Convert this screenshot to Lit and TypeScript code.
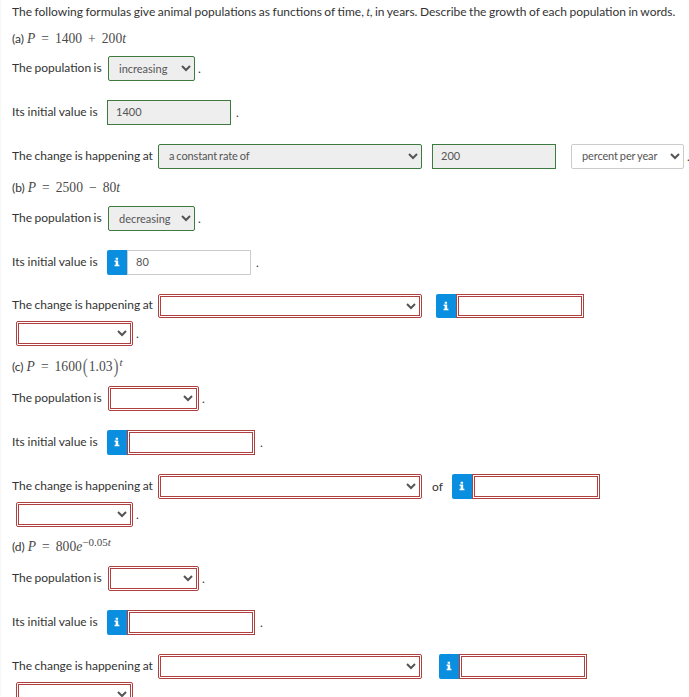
import { LitElement, html, css, nothing } from "lit";
import { customElement } from "lit/decorators.js";

type Kind = "ok" | "bad" | "plain";

const chg = (sel: string, kind: Kind, w: string) => html`
  <select class="f ${kind} ${w}"><option>${sel}</option></select>`;

const inp = (val: string, kind: Kind, w: string, info = false, short = false) => html`
  <span class="group">
    ${info
      ? html`<span class="info ${short ? "h24" : ""}"><svg width="6" height="10" viewBox="0 0 8 12"><path fill="#fff" d="M2.2 0.4h3.2v2.6H2.2zM0.8 4.1h4.8v5.6h1.6v1.9H0.8V9.7h1.4V5.9H0.8z"/></svg></span>`
      : nothing}
    <input class="f ${kind} ${w} ${short ? "h24" : ""}" .value=${val} />
  </span>`;

const pop = html`<span class="label lpop">The population is</span>`;
const init = html`<span class="label linit">Its initial value is</span>`;
const change = html`<span class="label lchg">The change is happening at</span>`;

@customElement("app-root")
export class AppRoot extends LitElement {
  static styles = css`
    :host {
      display: block;
      width: 689px;
      height: 697px;
      overflow: hidden;
      background: #fff;
      color: #333;
      font-family: Lato, "Open Sans", sans-serif;
      font-size: 12px;
      word-spacing: -0.55px;
      box-sizing: border-box;
      border-left: 1px solid #f7f7f7;
      padding: 3px 0 0 11px;
    }
    .intro { height: 18px; line-height: 18px; margin: 0 0 7px; white-space: nowrap; }
    .intro i { font-family: "Liberation Serif", serif; }
    .math { box-sizing: border-box; padding-top: 2px; height: 20px; line-height: 20px; margin: 0 0 8px; display: flex; align-items: center; white-space: nowrap; }
    .math.b { margin-top: 8px; margin-bottom: 9px; }
    .math.c { height: 23px; }
    .math.d { height: 22px; }
    .eq { font-family: "Liberation Serif", serif; font-size: 13.6px; color: #4a4a4a; margin-left: 3px; word-spacing: 0; }
    .eq i { font-style: italic; }
    .eq .op { margin: 0 6px; }
    .eq sup { font-size: 11px; line-height: 0; vertical-align: 5px; }
    .eq .paren { display: inline-block; font-size: 15px; line-height: 1; color: #666; margin: 0 1px; transform: scaleY(1.45); }
    .row { display: flex; flex-wrap: wrap; align-items: center; row-gap: 3px; margin-bottom: 19px; width: 677px; }
    .row.last { margin-bottom: 0; }
    .row.single { flex-wrap: nowrap; }
    .label { flex: none; white-space: nowrap; padding-bottom: 2px; box-sizing: border-box; }
    .lpop { width: 96px; }
    .linit { width: 95px; word-spacing: -0.2px; }
    .lchg { width: 146px; padding-bottom: 3px; }
    .dot { margin-left: 3px; }
    .dot.wide { margin-left: 5px; }
    .second { margin-left: 4px; }
    .g10 { margin-left: 10px; }
    .g14 { margin-left: 14px; }
    .g15 { margin-left: 15px; }
    .g17 { margin-left: 17px; }
    .of { margin-left: 10px; margin-right: 9px; }
    .group { display: inline-flex; align-items: stretch; }
    .info {
      width: 20px;
      height: 25px;
      flex: none;
      background: #0a8ee0;
      border-radius: 2px 0 0 2px;
      display: flex;
      align-items: center;
      justify-content: center;
      padding-bottom: 1px;
      box-sizing: border-box;
    }
    .f {
      box-sizing: border-box;
      height: 25px;
      margin: 0;
      flex: none;
      font-family: Lato, "Open Sans", sans-serif;
      font-size: 11px;
      word-spacing: -0.7px;
      color: #555;
      outline: none;
      border-radius: 2px;
      background-color: #fff;
    }
    input.f { padding: 0 8px 2px; border-radius: 0; }
    select.f { padding: 0 0 0 6px; }
    select.tight { letter-spacing: -0.12px; padding-bottom: 2px; }
    .ok { border: 1px solid #3d7a3d; background-color: #eee; }
    .plain { border: 1px solid #ccc; }
    .bad { border: 3px double #b04040; }
    .info.h24, .f.h24 { height: 24px; }
    .w87 { width: 87px; }
    .w91 { width: 91px; }
    .w124 { width: 124px; }
    .w128 { width: 128px; }
    .w264 { width: 264px; }
    .w113 { width: 113px; }
    .w117 { width: 117px; }
  `;

  render() {
    return html`
      <div class="intro">The following formulas give animal populations as functions of time, <i>t</i>, in years. Describe the growth of each population in words.</div>

      <div class="math"><span>(a)</span><span class="eq"><i>P</i><span class="op">=</span>1400<span class="op">+</span>200<i>t</i></span></div>
      <div class="row">${pop}${chg("increasing", "ok", "w87")}<span class="dot">.</span></div>
      <div class="row">${init}${inp("1400", "ok", "w124")}<span class="dot wide">.</span></div>
      <div class="row last single">${change}${chg("a constant rate of", "ok", "w264 tight")}
        <span class="g10">${inp("200", "ok", "w124")}</span>
        <span class="g15">${chg("percent per year", "plain", "w113 tight")}</span><span class="dot">.</span></div>

      <div class="math b"><span>(b)</span><span class="eq"><i>P</i><span class="op">=</span>2500<span class="op">−</span>80<i>t</i></span></div>
      <div class="row">${pop}${chg("decreasing", "ok", "w87")}<span class="dot">.</span></div>
      <div class="row">${init}${inp("80", "plain", "w124", true)}<span class="dot wide">.</span></div>
      <div class="row last">${change}${chg("", "bad", "w264 h24")}
        <span class="g14">${inp("", "bad", "w128", true, true)}</span>
        <span class="second">${chg("", "bad", "w117")}</span><span class="dot">.</span></div>

      <div class="math b c"><span>(c)</span><span class="eq"><i>P</i><span class="op">=</span>1600<span class="paren">(</span>1.03<span class="paren">)</span><sup><i>t</i></sup></span></div>
      <div class="row">${pop}${chg("", "bad", "w91")}<span class="dot">.</span></div>
      <div class="row">${init}${inp("", "bad", "w128", true)}<span class="dot wide">.</span></div>
      <div class="row last">${change}${chg("", "bad", "w264")}
        <span class="of">of</span>${inp("", "bad", "w128", true)}
        <span class="second">${chg("", "bad", "w117")}</span><span class="dot">.</span></div>

      <div class="math b d"><span>(d)</span><span class="eq"><i>P</i><span class="op">=</span>800<i>e</i><sup>−0.05<i>t</i></sup></span></div>
      <div class="row">${pop}${chg("", "bad", "w91")}<span class="dot">.</span></div>
      <div class="row">${init}${inp("", "bad", "w128", true)}<span class="dot wide">.</span></div>
      <div class="row last">${change}${chg("", "bad", "w264")}
        <span class="g17">${inp("", "bad", "w128", true)}</span>
        <span class="second">${chg("", "bad", "w117")}</span><span class="dot">.</span></div>
    `;
  }
}
